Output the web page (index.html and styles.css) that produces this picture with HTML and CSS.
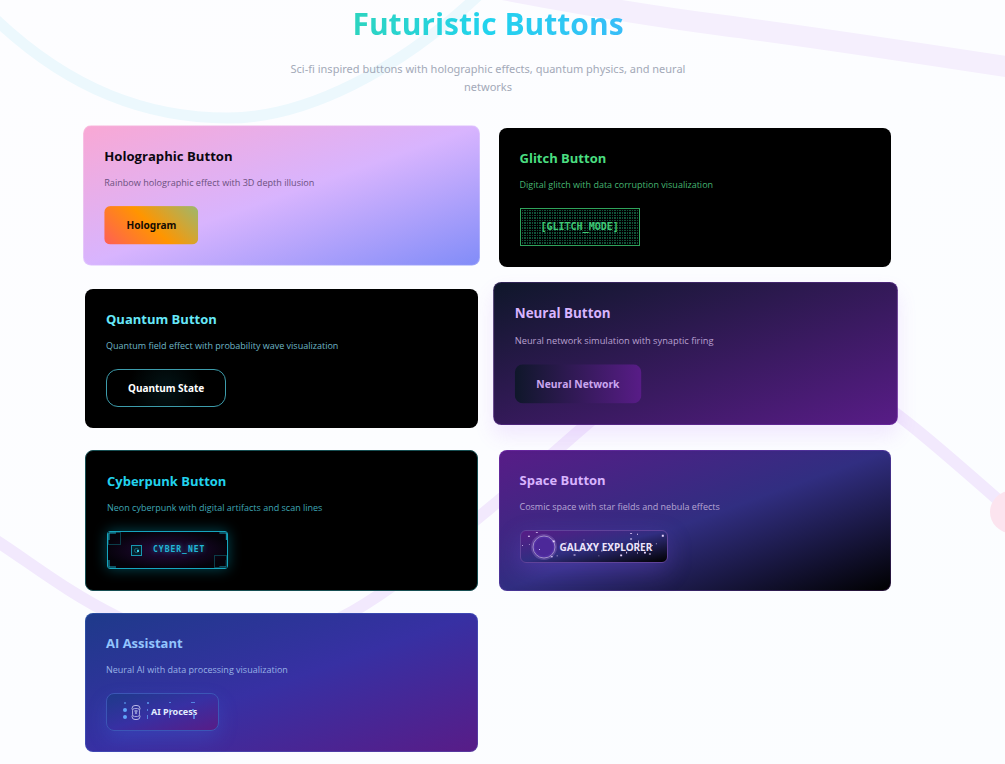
FILE: index.html
```html
<!DOCTYPE html>
<html lang="en">
<head>
  <meta charset="UTF-8">
  <meta name="viewport" content="width=device-width, initial-scale=1.0">
  <title>Futuristic Buttons</title>
  <link rel="stylesheet" href="styles.css">
</head>

<body>
  <!-- Background waves -->
  <svg class="waves" viewBox="0 0 1005 764" preserveAspectRatio="xMidYMid slice" aria-hidden="true">
    <path d="M-10 14 C70 92 150 118 228 118 S400 70 482 -8" fill="none" stroke="#ecf8fd" stroke-width="11"/>
    <path d="M500 -11 Q620 12 720 25 T1015 68" fill="none" stroke="#f5effd" stroke-width="21"/>
    <path d="M-5 540 C50 575 130 645 230 645 S390 590 490 508 S650 350 740 350 S890 405 1012 512" fill="none" stroke="#f2e9fd" stroke-width="12"/>
    <circle cx="1011" cy="512" r="21" fill="#fce4ef"/>
  </svg>

  <main class="page">
    <header class="page-header">
      <h1>Futuristic Buttons</h1>
      <p>Sci-fi inspired buttons with holographic effects, quantum physics, and neural networks</p>
    </header>

    <div class="card-grid">
      <section class="card card-holo">
        <h2>Holographic Button</h2>
        <p>Rainbow holographic effect with 3D depth illusion</p>
        <button type="button" class="btn btn-holo">Hologram</button>
      </section>

      <section class="card card-glitch">
        <h2>Glitch Button</h2>
        <p>Digital glitch with data corruption visualization</p>
        <button type="button" class="btn btn-glitch">[GLITCH_MODE]</button>
      </section>

      <section class="card card-quantum">
        <h2>Quantum Button</h2>
        <p>Quantum field effect with probability wave visualization</p>
        <button type="button" class="btn btn-quantum">Quantum State</button>
      </section>

      <section class="card card-neural">
        <h2>Neural Button</h2>
        <p>Neural network simulation with synaptic firing</p>
        <button type="button" class="btn btn-neural">Neural Network</button>
      </section>

      <section class="card card-cyber">
        <h2>Cyberpunk Button</h2>
        <p>Neon cyberpunk with digital artifacts and scan lines</p>
        <button type="button" class="btn btn-cyber">
          <svg class="corners" viewBox="0 0 120 36" preserveAspectRatio="none" aria-hidden="true">
            <path d="M1 8V1H8M112 1H119V8M119 28V35H112M8 35H1V28" fill="none" stroke="#16a5be"/>
          </svg>
          <svg class="icon-cyber" viewBox="0 0 11 11" aria-hidden="true">
            <rect x="0.5" y="0.5" width="10" height="10" fill="#06202a" stroke="#1797b0"/>
            <circle cx="5.5" cy="5.5" r="2" fill="none" stroke="#17657a"/>
            <path d="M6 5h2v2H6z" fill="#38c8e4"/>
          </svg>
          CYBER_NET
        </button>
      </section>

      <section class="card card-space">
        <h2>Space Button</h2>
        <p>Cosmic space with star fields and nebula effects</p>
        <button type="button" class="btn btn-space">
          <svg class="icon-planet" viewBox="0 0 26 26" aria-hidden="true">
            <circle cx="13" cy="13" r="12" fill="none" stroke="#8b6bc4" stroke-width="2" opacity="0.4"/>
            <circle cx="13" cy="13" r="11" fill="#5330a5" stroke="#a08cc8"/>
            <circle cx="13" cy="13" r="9" fill="#4c2899"/>
            <path d="M8 15h1v1H8z" fill="#c4b5fd"/>
          </svg>
          GALAXY EXPLORER
          <svg class="stars" viewBox="0 0 148 33" preserveAspectRatio="none" aria-hidden="true">
            <g fill="#e9d5ff">
              <path d="M7 5h2v1H7zM142 4h2v2h-2zM110 2h2v1h-2zM117 3h1v1h-1zM110 8h2v1h-2zM32 10h2v2h-2zM30 27h2v1h-2zM36 26h1v1h-1zM53 25h2v1h-2zM100 25h2v2h-2zM106 22h1v2h-1zM117 23h1v1h-1zM124 22h2v2h-2zM129 24h2v1h-2z"/>
              <path d="M15 1h2v1h-2zM63 9h1v1h-1zM8 14h1v1H8zM1 15h1v1H1zM45 12h1v1h-1zM58 20h1v2h-1zM72 19h1v1h-1zM81 20h1v2h-1zM78 26h1v1h-1zM118 10h1v4h-1zM136 13h1v1h-1zM132 15h1v1h-1z" opacity="0.7"/>
            </g>
          </svg>
        </button>
      </section>

      <section class="card card-ai">
        <h2>AI Assistant</h2>
        <p>Neural AI with data processing visualization</p>
        <button type="button" class="btn btn-ai">
          <svg class="data-dots" viewBox="0 0 76 20" aria-hidden="true">
            <g fill="#60a5fa">
              <circle cx="2" cy="2" r="1" opacity="0.7"/>
              <circle cx="2" cy="9" r="2"/>
              <circle cx="2" cy="16" r="2"/>
              <path d="M24 1h2v2h-2zM24 8h1v2h-1zM24 14h1v4h-1zM46 1h2v1h-2zM46 8h2v2h-2zM46 14h1v3h-1zM68 1h4v1h-4zM69 8h2v2h-2zM70 13h2v5h-2z" opacity="0.7"/>
            </g>
          </svg>
          <svg class="icon-ai" viewBox="0 0 10 15" aria-hidden="true">
            <rect x="1" y="0.5" width="8" height="6" rx="3" fill="none" stroke="#b9b8e6"/>
            <rect x="1" y="8.5" width="8" height="6" rx="3" fill="none" stroke="#b9b8e6"/>
            <rect x="1.5" y="3.5" width="7" height="8" rx="2" fill="#3a35a2" stroke="#a3a3dc"/>
            <path d="M3.500 6h3M5 7v2" fill="none" stroke="#dbeafe"/>
          </svg>
          AI Process
        </button>
      </section>
    </div>
  </main>
</body>
</html>
```
FILE: styles.css
```css
* {
  box-sizing: border-box;
}

body {
  margin: 0;
  min-height: 100vh;
  position: relative;
  overflow-x: hidden;
  background: linear-gradient(to bottom right, #fdfdff, #fbfdff);
  font-family: "Noto Sans", "Open Sans", sans-serif;
}

.waves {
  position: absolute;
  top: 0;
  left: 0;
  width: 100%;
  height: 100%;
}

.page {
  position: relative;
  padding: 4px 114px 12px 85px;
}

.page-header {
  margin-bottom: 32px;
  text-align: center;
}

.page-header h1 {
  width: fit-content;
  margin: 0 auto 16px;
  font-family: "Open Sans", sans-serif;
  font-size: 30px;
  line-height: 40px;
  font-weight: 700;
  background: linear-gradient(to right, #2dd4bf, #22d3ee, #38bdf8);
  -webkit-background-clip: text;
  background-clip: text;
  color: transparent;
}

.page-header p {
  max-width: 430px;
  margin: 0 auto;
  color: #a3a9b8;
  font-size: 11px;
  line-height: 18px;
}

.card-grid {
  display: grid;
  grid-template-columns: 1fr 1fr;
  gap: 22px 21px;
}

.card {
  padding: 20px;
  border: 1px solid transparent;
  border-radius: 8px;
}

.card h2 {
  margin: 0 0 10px;
  font-family: "Open Sans", sans-serif;
  font-size: 13px;
  line-height: 18px;
  font-weight: 700;
}

.card p {
  margin: 0 0 15px;
  font-family: "Open Sans", sans-serif;
  font-size: 9px;
  line-height: 16px;
}

.btn {
  position: relative;
  display: flex;
  align-items: center;
  height: 38px;
  padding: 0 21px;
  border: 1px solid transparent;
  border-radius: 6px;
  font-family: inherit;
  font-size: 10px;
  line-height: 16px;
  font-weight: 700;
  cursor: pointer;
}

/* Holographic */
.card-holo {
  background: linear-gradient(to bottom right, #f9a8d4, #d8b4fe, #818cf8) border-box;
  border-color: rgba(255, 255, 255, 0.2);
  transform: translateY(-2px) scale(1.01);
}

.card-holo h2 {
  color: #0b0710;
}

.card-holo p {
  color: #6b5080;
}

.btn-holo {
  background: linear-gradient(45deg, #ff5e57, #ff9500 50%, #9cb86e) border-box;
  color: #140c04;
}

/* Glitch */
.card-glitch {
  background: #000;
}

.card-glitch h2 {
  color: #4ade80;
}

.card-glitch p {
  color: #46b571;
}

.btn-glitch {
  padding: 0 20px;
  background:
    repeating-linear-gradient(to right, #000 0 1px, transparent 1px 2px, #000 2px 3px, transparent 3px 5px),
    repeating-linear-gradient(to bottom, #000 0 1px, transparent 1px 2px, #000 2px 3px, transparent 3px 5px),
    #115238;
  border-color: #2fa35c;
  border-radius: 0;
  color: #3fc975;
  font-family: "DejaVu Sans Mono", monospace;
}

/* Quantum */
.card-quantum {
  background: #000;
}

.card-quantum h2 {
  color: #67e8f9;
}

.card-quantum p {
  color: #6fb6c6;
}

.btn-quantum {
  background: radial-gradient(circle, #031416, #000 60%);
  border-color: #3d9cab;
  border-radius: 12px;
  color: #fff;
}

/* Neural */
.card-neural {
  background: linear-gradient(to bottom right, #0f172a, #581c87) border-box;
  border-color: rgba(168, 85, 247, 0.2);
  box-shadow: 0 10px 20px rgba(168, 85, 247, 0.12);
  transform: translateY(-5px) scale(1.03);
}

.card-neural h2 {
  color: #d8b4fe;
}

.card-neural p {
  color: #b9a0d0;
}

.btn-neural {
  padding: 0 20px;
  background: linear-gradient(to right, #0f172a, #581c87) border-box;
  border-radius: 8px;
  color: #cba6ef;
  font-family: "Open Sans", sans-serif;
}

/* Cyberpunk */
.card-cyber {
  padding: 21px;
  background: #000;
  border-color: #164e52;
}

.card-cyber h2 {
  color: #22d3ee;
}

.card-cyber p {
  color: #3fa6b5;
}

.btn-cyber {
  gap: 11px;
  padding: 0 22px 0 23px;
  background: radial-gradient(ellipse, #260a3d, #05020a 75%);
  border-color: #16a5be;
  border-radius: 3px;
  box-shadow: 0 0 14px rgba(6, 182, 212, 0.4);
  color: #22b8d6;
  font-family: "DejaVu Sans Mono", monospace;
  font-size: 8px;
  letter-spacing: 1px;
  text-shadow: 0 0 5px #0e7490;
}

.btn-cyber::before,
.btn-cyber::after {
  content: "";
  position: absolute;
  width: 11px;
  height: 11px;
  border: 1px solid #0b3d49;
}

.btn-cyber::before {
  top: 0;
  left: 0;
}

.btn-cyber::after {
  right: 0;
  bottom: 0;
}

.icon-cyber {
  width: 11px;
  height: 11px;
}

/* Space */
.card-space {
  background: linear-gradient(to bottom right, #581c87, #312e81, #000) border-box;
  border-color: rgba(168, 85, 247, 0.2);
}

.card-space h2 {
  color: #d8b4fe;
}

.card-space p {
  color: #b7a5d4;
}

.btn-space {
  gap: 3px;
  height: 33px;
  padding: 0 15px 0 10px;
  background: linear-gradient(to bottom right, #581c87, #312e81, #000);
  border-color: #60439a;
  box-shadow: 0 8px 24px rgba(139, 92, 246, 0.25);
  color: #ede4fb;
}

.icon-planet {
  width: 26px;
  height: 26px;
}

.stars,
.corners {
  position: absolute;
  top: 0;
  left: 0;
  width: 100%;
  height: 100%;
}

/* AI */
.card-ai {
  background: linear-gradient(to bottom right, #1e3a8a, #3730a3, #581c87) border-box;
  border-color: rgba(96, 165, 250, 0.2);
}

.card-ai h2 {
  color: #93c5fd;
}

.card-ai p {
  color: #99b2e6;
}

.btn-ai {
  gap: 10px;
  padding: 0 21px 0 24px;
  background: linear-gradient(to bottom right, #1e3a8a, #3730a3, #581c87);
  border-color: #3c56b6;
  border-radius: 8px;
  box-shadow: 0 8px 20px rgba(59, 130, 246, 0.2);
  color: #e3edfd;
  font-size: 9px;
}

.icon-ai {
  width: 10px;
  height: 15px;
}

.data-dots {
  position: absolute;
  top: 7px;
  left: 16px;
  width: 76px;
  height: 20px;
}
```
